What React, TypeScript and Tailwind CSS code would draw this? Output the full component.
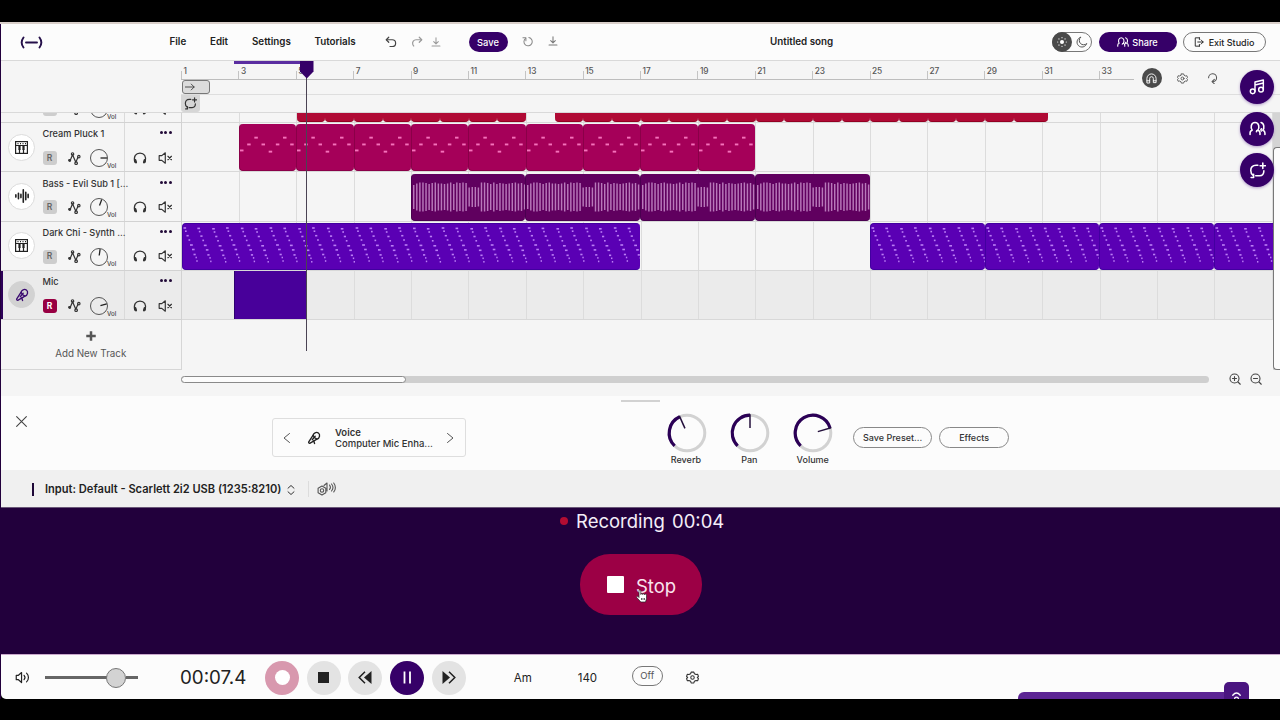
import React from "react";

type IconProps = { className?: string; children?: React.ReactNode; sw?: number; box?: string };

function Svg({ className, children, sw = 2, box = "0 0 24 24" }: IconProps) {
  return (
    <svg
      className={`shrink-0 ${className ?? ""}`}
      viewBox={box}
      fill="none"
      stroke="currentColor"
      strokeWidth={sw}
      strokeLinecap="round"
      strokeLinejoin="round"
    >
      {children}
    </svg>
  );
}

const UndoIcon = ({ className }: IconProps) => (
  <Svg className={className} sw={2.4}>
    <path d="M7.500 2.500 2.500 7.500l5 5" />
    <path d="M3 7.500H14.500a6.700 6.700 0 0 1 0 13.500H10" />
  </Svg>
);
const RedoIcon = ({ className }: IconProps) => (
  <Svg className={className} sw={2.4}>
    <path d="m16.500 2.500 5 5-5 5" />
    <path d="M21 7.500H10a7 7 0 0 0-6.500 9c.3 1.500 1 2.800 2 3.500" />
  </Svg>
);
const DownloadIcon = ({ className }: IconProps) => (
  <Svg className={className} sw={2.5}>
    <path d="M12 2v14M6.500 11l5.500 5.500 5.500-5.500M2.500 21.500h19" />
  </Svg>
);
const HistoryIcon = ({ className }: IconProps) => (
  <Svg className={className} sw={2.2}>
    <path d="M2 4h6.500v6.500" />
    <path d="M8 5a9 9 0 1 0 7-1.500" />
  </Svg>
);
const LoopRedoIcon = ({ className }: IconProps) => (
  <Svg className={className} sw={2.3}>
    <path d="M3.500 10.500a8.700 8.700 0 1 1 9.500 8.500" />
    <path d="m16 14-5 5 5 4.500" />
  </Svg>
);
const PeopleIcon = ({ className, sw = 2.2 }: IconProps) => (
  <Svg className={className} sw={sw}>
    <path d="M1.500 20.500v-2c0-2.300 1-3.500 3-4C2 11 2.500 3.500 8.500 3.500s6.500 7.500 4 11c-1.200 0-2 .8-2 2M12.500 14.500c2 .5 3 1.700 3 4v2" />
    <path d="M17 3.500c4.500 1 5 8 2.500 11 2 .7 3 1.800 3 4v2M17.500 15.500c-1-1-1-2 0-3" />
  </Svg>
);
const LoopPlusIcon = ({ className }: IconProps) => (
  <Svg className={className} sw={2.2}>
    <path d="M12.500 4.500H10C4.500 4.500 2.500 8 2.500 12c0 3 1 5 3 6.500M3 22h3.500v-4.500M9.500 19.500H15c4.500 0 6-3 6-7" />
    <path d="M19.500 1.500v7.500M15.700 5.200h7.600" />
  </Svg>
);
const MusicIcon = ({ className }: IconProps) => (
  <Svg className={className} sw={2.2}>
    <path d="M9 18.500V4.500l12.500-3V16M9 9l12.500-3" />
    <circle cx="5.500" cy="18.500" r="3.500" />
    <circle cx="18" cy="16" r="3.500" />
  </Svg>
);
const GearIcon = ({ className }: IconProps) => (
  <Svg className={className} sw={2}>
    <path d="M9.500 2h5l1 3 3 1.500 3-.5 1.500 4-2 2 2 2-1.500 4-3-.5-3 1.500-1 3h-5l-1-3-3-1.500-3 .5-1.500-4 2-2-2-2 1.500-4 3 .5 3-1.500z" />
    <circle cx="12" cy="12" r="3.200" />
  </Svg>
);
const MicIcon = ({ className, sw = 2.3 }: IconProps) => (
  <Svg className={className} sw={sw}>
    <path d="M10.500 7 3 18.500c-.8 1.800.8 3.200 2.400 2.300L17 14" />
    <path d="M10.500 7.500C11 3.500 16 1 19.500 3.500S22 13 17 14c-3-1-5.500-3.500-6.500-6.500z" />
    <path d="M9 15 14 9M11.500 17l1.500 4.500" />
  </Svg>
);
const KeysIcon = ({ className }: IconProps) => (
  <svg className={className} viewBox="0 0 13 13" fill="none" stroke="#222" strokeWidth="1.200">
    <rect x=".6" y=".6" width="11.800" height="11.800" />
    <path d="M.6 4.500h11.800M4.500 8v4.500M8.500 8v4.500" />
    <path d="M4.500 4.500V9M8.500 4.500V9" strokeWidth="2.200" />
    <path d="M2.500 2.600h1M5 2.600h1M7.500 2.600h1M10 2.600h1" />
  </svg>
);
const WaveIcon = ({ className }: IconProps) => (
  <Svg className={className} sw={1.500} box="0 0 13 13">
    <path d="M.8 5.500v2M3.200 4v5M5.500 5v3M7.700 .8v11.400M10 3v7M12.200 5v3" />
  </Svg>
);
const AutomationIcon = ({ className }: IconProps) => (
  <Svg className={className} sw={1.100} box="0 0 12 12">
    <path d="M.6 7.500 2 7.800 4.200 2.500 7.200 9.500 9.200 4.800" />
    <circle cx="4.200" cy="1.800" r="1.100" />
    <circle cx="7.500" cy="10.300" r="1.200" />
    <circle cx="10" cy="4.300" r="1.100" />
    <circle cx="1.600" cy="7.800" r=".8" />
  </Svg>
);
const HeadphonesIcon = ({ className }: IconProps) => (
  <Svg className={className} sw={2.1}>
    <path d="M3 19C.5 9 5 3.500 12 3.500S23.500 9 21 19" />
    <path d="m4 15.500 1.200 4M20 15.500l-1.200 4" strokeWidth="3.600" />
  </Svg>
);
const MuteIcon = ({ className }: IconProps) => (
  <Svg className={className} sw={2}>
    <path d="M2 8v8h4.500l6 5V3l-6 5zM17 9l6 6M23 9l-6 6" />
  </Svg>
);
const SpeakerIcon = ({ className }: IconProps) => (
  <Svg className={className} sw={1.900}>
    <path d="M2 8.500v7h3.500l5 4.500V4l-5 4.500zM14.500 8.500c1.700 2 1.700 5 0 7M18.500 5c4 4 4 10 0 14" />
  </Svg>
);

function VolDial({ angle }: { angle: number }) {
  return (
    <svg className="h-[20px] w-[20px] shrink-0" viewBox="-10 -10 20 20" fill="none" stroke="#555">
      <circle r="8.500" strokeWidth="1" />
      <path d="M0 -1.500V-8" stroke="#222" strokeWidth="1.300" transform={`rotate(${angle})`} />
    </svg>
  );
}

type Track = { name?: string; icon: "keys" | "wave" | "mic"; angle: number; armed?: boolean };

function TrackHead({ name, icon, angle, armed }: Track) {
  return (
    <div
      className={`flex h-[49.25px] w-[180.5px] shrink-0 border-r border-b border-[#d2d2d2] ${armed ? "bg-[#ebebeb]" : "bg-[#f5f5f5]"}`}
    >
      <div className={`flex w-[41px] shrink-0 items-center ${armed ? "border-l-2 border-[#2d0058] pl-[5px]" : "pl-[7px]"}`}>
        <div
          className={`flex h-[27px] w-[27px] items-center justify-center rounded-full border ${armed ? "border-[#d2d2d2] bg-[#d2d2d2]" : "border-[#dcdcdc] bg-white"}`}
        >
          {icon === "keys" && <KeysIcon className="h-[13px] w-[13px]" />}
          {icon === "wave" && <WaveIcon className="h-[14px] w-[14px] text-[#222]" />}
          {icon === "mic" && <MicIcon className="h-[14px] w-[14px] text-[#3a0a70]" />}
        </div>
      </div>
      <div className="flex w-[83px] shrink-0 flex-col border-r border-[#dadada]">
        <div className="flex h-[22px] items-center whitespace-nowrap pl-[0.5px] text-[9.2px] font-medium leading-none text-[#333]">
          {name}
        </div>
        <div className="flex h-[26px] items-center pl-[0.5px]">
          <div
            className={`flex h-[14px] w-[14px] items-center justify-center rounded-[3px] text-[8.5px] leading-none ${armed ? "bg-[#980042] font-bold text-white" : "bg-[#cdcdcd] font-semibold text-[#666]"}`}
          >
            {name ? "R" : null}
          </div>
          <AutomationIcon className="ml-[11.5px] h-[13px] w-[13px] text-[#333]" />
          <div className="ml-[8px] flex items-end">
            <VolDial angle={angle} />
            <span className="-mb-px -ml-[2px] text-[6.2px] font-medium leading-none text-[#444]">Vol</span>
          </div>
        </div>
      </div>
      <div className="flex w-[56px] flex-col">
        <div className="flex h-[20px] items-center justify-center gap-[1.500px] pl-[26px]">
          <i className="h-[3px] w-[3px] rounded-full bg-[#220a38]" />
          <i className="h-[3px] w-[3px] rounded-full bg-[#220a38]" />
          <i className="h-[3px] w-[3px] rounded-full bg-[#220a38]" />
        </div>
        <div className="flex h-[29px] items-center pt-[2px] pl-[8px] text-[#333]">
          <HeadphonesIcon className="h-[14px] w-[14px]" />
          <MuteIcon className="ml-[11px] h-[14px] w-[14px]" />
        </div>
      </div>
    </div>
  );
}

const pinkY = [26.500, 20.500, 13.700, 20.500, 27.700, 20.500, 13.700, 20.500];

function PinkClip() {
  return (
    <div className="h-[47px] w-[57.38px] shrink-0 overflow-hidden rounded-[4px] border-b border-l border-[#8a0048] bg-[#a50059]">
      <svg className="h-full w-full" fill="#f572bb">
        {pinkY.map((y, i) => (
          <rect key={i} x={i * 7.170} y={y - 1} width="3.500" height="1.900" />
        ))}
      </svg>
    </div>
  );
}

const waveH = [24, 27, 29, 29, 28, 26, 28, 29, 27, 27, 26, 27, 29, 26, 29, 28, 29, 28, 19, 20, 20, 19, 29, 29, 28, 26, 29, 26, 28, 27, 26, 27, 28, 29, 27, 28, 25];

function BassClip() {
  return (
    <div className="h-[47px] w-[114.76px] shrink-0 overflow-hidden rounded-[4px] border-b border-l border-[#4a0050] bg-[#60005f]">
      <svg className="h-full w-full" fill="#b878ba">
        {waveH.map((h, i) => (
          <rect key={i} x={1 + i * 3.080} y={23 - h / 2} width="1.450" height={h} />
        ))}
      </svg>
    </div>
  );
}

const synthDots = [
  [0.500, 4, 2.600], [2, 7.200, 1.700], [3.500, 11.700, 2.200], [5.500, 16, 1.700], [7, 21, 2.800],
  [9, 25.500, 2.600], [10.500, 30.500, 2.200], [12.500, 33.500, 1.400], [13.300, 37, 1.400],
];

function SynthClip({ wide }: { wide?: boolean }) {
  const count = wide ? 33 : 9;
  return (
    <div
      className={`h-[47px] shrink-0 overflow-hidden rounded-[4px] border-t border-b border-l border-[#4200a0] bg-[#5a00b4] ${wide ? "w-[458.500px]" : "w-[114.76px]"}`}
    >
      <svg className="h-full w-full" fill="#bb7df5">
        {Array.from({ length: count }, (_, c) =>
          synthDots.map(([x, y, w], i) => (
            <rect key={`${c}-${i}`} x={x + c * 14.345 - (c % 2) * 0.500} y={y + (c % 3) * 0.400 - 0.800} width={w} height="1.600" />
          )),
        )}
      </svg>
    </div>
  );
}

function RedClip({ last }: { last?: boolean }) {
  return (
    <div className={`h-[9px] shrink-0 rounded-b-[4px] border-b border-[#930022] bg-[#b00a35] ${last ? "w-[34px]" : "w-[28.690px]"}`} />
  );
}

function times(n: number) {
  return Array.from({ length: n }, (_, i) => i);
}

function Lane({ children, selected, short }: { children?: React.ReactNode; selected?: boolean; short?: boolean }) {
  return (
    <div
      className={`relative w-full shrink-0 overflow-hidden border-b border-[#d8d8d8] ${short ? "h-[10px]" : "h-[49.25px]"} ${selected ? "bg-[#ebebeb]" : "bg-[#f5f5f5]"}`}
    >
      <div className="absolute inset-0 flex">
        {times(20).map((i) => (
          <div key={i} className={`w-[57.380px] shrink-0 ${i ? "border-l border-[#dcdcdc]" : ""}`} />
        ))}
      </div>
      <div className="relative flex h-full items-start">{children}</div>
    </div>
  );
}

function BigDial({ label, angle }: { label: string; angle: number }) {
  const r = 17.800;
  const pt = (deg: number, rad: number) => {
    const a = ((deg - 90) * Math.PI) / 180;
    return `${(rad * Math.cos(a)).toFixed(2)} ${(rad * Math.sin(a)).toFixed(2)}`;
  };
  const large = angle + 136 > 180 ? 1 : 0;
  return (
    <div className="flex w-[63.400px] flex-col items-center">
      <svg className="h-[42px] w-[42px]" viewBox="-21 -21 42 42" fill="none">
        <circle r={r} stroke="#d2d2d2" strokeWidth="3" />
        <path d={`M${pt(-136, r)}A${r} ${r} 0 ${large} 1 ${pt(angle, r)}`} stroke="#2b0056" strokeWidth="3.200" />
        <path d={`M${pt(angle, r + 1)}L${pt(angle, 5)}`} stroke="#24103c" strokeWidth="1.500" />
      </svg>
      <span className="mr-[1.500px] text-[9px] font-medium leading-[12px] text-[#333]">{label}</span>
    </div>
  );
}

function Header() {
  return (
    <header className="flex h-[37px] shrink-0 items-center border-b border-[#d9d9d9] bg-[#fcfcfc] text-[9.8px] font-semibold text-[#222]">
      <svg className="ml-[19px] h-[13px] w-[23px] text-[#25104a]" viewBox="0 0 23 13" fill="none" stroke="currentColor" strokeWidth="1.900" strokeLinecap="round">
        <path d="M3.500 1.500Q-.2 6.500 3.500 11.500M19.500 1.500q3.700 5 0 10M6 6.500h11" />
      </svg>
      <nav className="ml-[126.500px] flex whitespace-nowrap">
        <span className="w-[40.500px]">File</span>
        <span className="w-[42px]">Edit</span>
        <span className="w-[62.500px]">Settings</span>
        <span className="w-[70px]">Tutorials</span>
      </nav>
      <UndoIcon className="h-[12px] w-[12px] text-[#444]" />
      <RedoIcon className="ml-[14px] h-[12px] w-[12px] text-[#999]" />
      <DownloadIcon className="ml-[8px] h-[10px] w-[10px] text-[#999]" />
      <div className="ml-[28px] flex h-[20px] w-[39px] items-center justify-center rounded-full bg-[#360068] pt-[2px] text-[9.300px] font-medium text-white">
        Save
      </div>
      <HistoryIcon className="ml-[14.500px] mb-[2px] h-[11px] w-[11px] text-[#888]" />
      <DownloadIcon className="ml-[15px] mb-[2px] h-[10px] w-[10px] text-[#777]" />
      <div className="ml-[182px] w-[134px] whitespace-nowrap pl-[30px]">Untitled song</div>
      <div className="ml-[177.500px] flex h-[20px] w-[40px] shrink-0 items-center rounded-full border border-[#777]">
        <div className="-ml-px flex h-[20px] w-[20px] shrink-0 items-center justify-center rounded-full bg-[#4a4a4a]">
          <svg className="h-[12px] w-[12px]" viewBox="-6 -6 12 12" fill="#fff">
            <circle r="2" />
            {times(8).map((i) => (
              <circle key={i} cx="0" cy="-4.300" r=".6" transform={`rotate(${i * 45})`} />
            ))}
          </svg>
        </div>
        <Svg className="ml-[4px] h-[12px] w-[12px] text-[#555]">
          <path d="M9 2.500A10 10 0 1 0 21.500 15 8.500 8.500 0 0 1 9 2.500z" />
        </Svg>
      </div>
      <div className="ml-[7px] flex h-[20px] w-[78px] items-center justify-center gap-[3px] rounded-full bg-[#360068] text-[9.200px] font-medium text-white">
        <PeopleIcon className="mb-px h-[12px] w-[12px]" />
        <span className="pt-px">Share</span>
      </div>
      <div className="ml-[6px] flex h-[20px] w-[83px] items-center justify-center gap-[5px] whitespace-nowrap rounded-full border border-[#777] text-[9px] font-medium">
        <Svg className="mb-px h-[10px] w-[10px]" sw={2.200}>
          <path d="M13 2H3v20h10M13 2v4M13 22v-4M9 12h13M17 7l5 5-5 5" />
        </Svg>
        <span className="pt-px">Exit Studio</span>
      </div>
    </header>
  );
}

function Ruler() {
  return (
    <div className="flex h-[52px] shrink-0 border-b border-[#d9d9d9] bg-[#f5f5f5]">
      <div className="w-[180px] shrink-0" />
      <div className="flex flex-1 flex-col">
        <div className="flex h-[34px] border-b border-[#dedede]">
          <div className="flex w-[953px] shrink-0 flex-col">
            <div className="flex h-[19px] overflow-hidden border-b border-[#bdbdbd]">
              {times(17).map((i) => (
                <div key={i} className="flex w-[57.380px] shrink-0 items-end">
                  <div className="h-[8px] w-px bg-[#c4c4c4]" />
                  <span className="pb-[3px] pl-[1.500px] text-[8.300px] font-medium leading-[10px] text-[#555]">{i * 2 + 1}</span>
                </div>
              ))}
            </div>
            <div className="ml-[1px] flex h-[14px] w-[28px] items-center rounded-[3px] border border-[#777] bg-[#dcdcdc] pl-[2px] text-[#333]">
              <Svg className="h-[10px] w-[10px]">
                <path d="M1 12h21M15 5l7 7-7 7" />
              </Svg>
            </div>
          </div>
          <div className="flex items-center pl-[7.500px] pt-px text-[#555]">
            <div className="flex h-[20px] w-[20px] items-center justify-center rounded-full bg-[#4a4a4a] text-white">
              <Svg className="h-[11px] w-[11px]">
                <path d="M2 21v-9a10 10 0 0 1 20 0v9h-6v-9a4 4 0 0 0-8 0v9zM2 17h6M16 17h6" />
              </Svg>
            </div>
            <GearIcon className="ml-[15px] h-[11px] w-[11px]" />
            <LoopRedoIcon className="ml-[19.500px] h-[11px] w-[11px]" />
          </div>
        </div>
        <div className="flex h-[17px] w-[19px] items-center justify-center rounded-b-[3px] bg-[#d6d6d6] text-[#333]">
          <LoopPlusIcon className="h-[13px] w-[13px]" />
        </div>
      </div>
    </div>
  );
}

function Arrangement() {
  return (
    <section className="relative flex h-[335px] shrink-0 flex-col bg-[#f5f5f5]">
      <Ruler />
      <div className="flex h-[257px] shrink-0">
        <div className="flex w-[180.500px] shrink-0 flex-col">
          <div className="flex h-[10px] flex-col justify-end overflow-hidden">
            <TrackHead icon="keys" angle={90} />
          </div>
          <TrackHead name="Cream Pluck 1" icon="keys" angle={90} />
          <TrackHead name="Bass - Evil Sub 1 [..." icon="wave" angle={20} />
          <TrackHead name="Dark Chi - Synth ..." icon="keys" angle={8} />
          <TrackHead name="Mic" icon="mic" angle={75} armed />
          <div className="flex h-[50px] shrink-0 flex-col items-center border-r border-b border-[#d6d6d6] pt-[10px] text-[#555]">
            <Svg className="h-[12px] w-[12px]" sw={5}>
              <path d="M12 2.500v19M2.500 12h19" strokeLinecap="butt" />
            </Svg>
            <span className="mt-[5px] text-[9.800px] leading-[13px]">Add New Track</span>
          </div>
        </div>
        <div className="flex min-w-0 flex-1 flex-col overflow-hidden">
          <Lane short>
            <div className="w-[115px] shrink-0" />
            {times(8).map((i) => (
              <RedClip key={i} />
            ))}
            <div className="w-[28.690px] shrink-0" />
            {times(16).map((i) => (
              <RedClip key={i} />
            ))}
            <RedClip last />
          </Lane>
          <Lane>
            <div className="mt-px ml-[57.300px] flex">
              {times(9).map((i) => (
                <PinkClip key={i} />
              ))}
            </div>
          </Lane>
          <Lane>
            <div className="mt-[1.400px] ml-[229px] flex">
              {times(4).map((i) => (
                <BassClip key={i} />
              ))}
            </div>
          </Lane>
          <Lane>
            <div className="mt-px flex">
              <SynthClip wide />
              <div className="w-[229.900px] shrink-0" />
              {times(4).map((i) => (
                <SynthClip key={i} />
              ))}
            </div>
          </Lane>
          <Lane selected>
            <div className="ml-[52.500px] h-full w-[72px] border-l border-[#2e0070] bg-[#48009a]" />
          </Lane>
        </div>
        <div className="flex w-[7px] shrink-0 flex-col bg-[#d4d4d4] pt-[34px]">
          <div className="flex-1 rounded-l-[4px] border border-r-0 border-[#777] bg-[#fcfcfc]" />
        </div>
      </div>
      <div className="flex h-[26px] shrink-0 items-center pb-[7px]">
        <div className="ml-[180px] flex h-[7px] w-[1028px] rounded-full bg-[#cfcfcf]">
          <div className="h-[7px] w-[225px] rounded-full border border-[#8a8a8a] bg-[#fcfcfc]" />
        </div>
        <Svg className="mb-px ml-[20px] h-[12px] w-[12px] text-[#444]" sw={2.200}>
          <circle cx="11" cy="11" r="9" />
          <path d="m18 18 4.500 4.500M7 11h8M11 7v8" />
        </Svg>
        <Svg className="mb-px ml-[9px] h-[12px] w-[12px] text-[#444]" sw={2.200}>
          <circle cx="11" cy="11" r="9" />
          <path d="m18 18 4.500 4.500M7 11h8" />
        </Svg>
      </div>

      <div className="absolute top-0 left-[233px] h-[2.500px] w-[68px] bg-[#5a2da0]" />
      <div className="absolute top-0 left-[305px] h-[290px] w-px bg-[#4a4353]" />
      <svg className="absolute top-0 left-[299px] h-[18px] w-[14px]" viewBox="0 0 14 18">
        <path d="M0 0h13.500v10.500L6.800 17.500 0 10.500z" fill="#350068" />
      </svg>
      <div className="absolute top-[9px] left-[1239px] flex flex-col gap-[7.500px] text-white">
        <div className="flex h-[34px] w-[34px] items-center justify-center rounded-full bg-[#360068] shadow-[0_1px_3px_#b09ac8]">
          <MusicIcon className="h-[16px] w-[16px]" />
        </div>
        <div className="flex h-[34px] w-[34px] items-center justify-center rounded-full bg-[#360068] shadow-[0_1px_3px_#b09ac8]">
          <PeopleIcon className="h-[17px] w-[17px]" />
        </div>
        <div className="flex h-[34px] w-[34px] items-center justify-center rounded-full bg-[#360068] shadow-[0_1px_3px_#b09ac8]">
          <LoopPlusIcon className="h-[17px] w-[17px]" />
        </div>
      </div>
    </section>
  );
}

function InstrumentPanel() {
  return (
    <section className="flex h-[74px] shrink-0 flex-col bg-[#fcfcfc]">
      <div className="ml-[620px] mt-[4px] h-[2px] w-[39px] shrink-0 bg-[#d2d2d2]" />
      <div className="flex h-[68px]">
        <Svg className="mt-[13px] ml-[14px] h-[13px] w-[13px] text-[#444]">
          <path d="M3 3l18 18M21 3 3 21" />
        </Svg>
        <div className="mt-[16px] ml-[244px] flex h-[39px] w-[194px] items-center rounded-[3px] border border-[#dedede]">
          <Svg className="ml-[8px] h-[12px] w-[12px] text-[#555]">
            <path d="m17 3-11 9 11 9" />
          </Svg>
          <MicIcon className="ml-[14px] h-[14px] w-[14px] text-[#222]" />
          <div className="mt-px ml-[14px] w-[109px] whitespace-nowrap text-[9.500px] leading-[11.500px] text-[#333]">
            <div className="font-semibold">Voice</div>
            <div className="font-medium">Computer Mic Enha...</div>
          </div>
          <Svg className="h-[12px] w-[12px] text-[#555]">
            <path d="m7 3 11 9-11 9" />
          </Svg>
        </div>
        <div className="mt-[9.500px] ml-[189px] flex">
          <BigDial label="Reverb" angle={-24} />
          <BigDial label="Pan" angle={0} />
          <BigDial label="Volume" angle={74} />
        </div>
        <div className="mt-[25px] ml-[8px] flex h-[21px] gap-[7px] text-[9px] font-medium text-[#333]">
          <div className="flex w-[79px] items-center justify-center rounded-full border border-[#888]">Save Preset...</div>
          <div className="flex w-[70px] items-center justify-center rounded-full border border-[#888]">Effects</div>
        </div>
      </div>
    </section>
  );
}

function InputBar() {
  return (
    <section className="flex h-[38px] shrink-0 items-center border-b border-[#6a5878] bg-[#f0f0f0]">
      <div className="ml-[31px] mt-[2px] h-[13px] w-[2px] bg-[#1e0838]" />
      <span className="mt-[2px] ml-[11px] w-[241px] whitespace-nowrap text-[11.100px] font-semibold text-[#222]">
        Input: Default - Scarlett 2i2 USB (1235:8210)
      </span>
      <Svg className="mt-[2px] h-[12px] w-[10px] text-[#333]" box="0 0 20 24">
        <path d="M4 8.500 10 3l6 5.500M4 15.500l6 5.500 6-5.500" />
      </Svg>
      <div className="ml-[12px] h-[16px] w-px bg-[#dcdcdc]" />
      <Svg className="ml-[8px] h-[14px] w-[19px] text-[#555]" sw={1.100} box="0 0 19 14">
        <path d="m5 4 3.800 2.200v4.600L5 13l-3.900-2.200V6.200zM7 3.500 10 1v8M12.500 3c1 1.200 1 3.300 0 4.500M14.500 2c1.700 2 1.700 5 0 7M16.700 1c2.200 2.500 2.200 7 0 9" />
        <circle cx="5" cy="8.500" r="1.700" />
      </Svg>
    </section>
  );
}

function RecordingPanel() {
  return (
    <section className="flex h-[147px] shrink-0 flex-col items-center border-b border-[#c9a8cc] bg-[#22003c] text-white">
      <div className="flex h-[25px] w-full items-center pl-[559px] text-[18.500px] leading-none text-[#f4eef8]">
        <span className="h-[8px] w-[8px] rounded-full bg-[#b20d32]" />
        <span className="ml-[8px] w-[96px] whitespace-nowrap pt-px">Recording</span>
        <span className="whitespace-nowrap pt-px">00:04</span>
      </div>
      <div className="relative mt-[21px] ml-px flex h-[61px] w-[122px] shrink-0 items-center rounded-[30px] bg-[#9c0045]">
        <span className="ml-[27px] h-[17px] w-[17px] rounded-[1px] bg-white" />
        <span className="ml-[12px] mt-[3px] text-[18.500px] leading-none text-[#fae4ee]">Stop</span>
        <svg className="absolute top-[35px] left-[56px] h-[14px] w-[12px]" viewBox="0 0 12 14" fill="#fff" stroke="#222" strokeWidth=".7">
          <path d="M3 8.500V1.800a.9.9 0 0 1 1.800 0V5.500a.9.9 0 0 1 1.900 0 .9.9 0 0 1 1.900.3.9.9 0 0 1 1.900.5v3.500L9.500 13H4.800L.8 8.500c-.5-1 .6-1.600 1.300-.9z" />
          <path d="M5.500 9v2M7 9v2M8.500 9v2" />
        </svg>
      </div>
    </section>
  );
}

function Round({ children, dark }: { children: React.ReactNode; dark?: boolean }) {
  return (
    <div className={`flex h-[34px] w-[34px] items-center justify-center rounded-full ${dark ? "bg-[#360068]" : "bg-[#e3e3e3]"}`}>
      {children}
    </div>
  );
}

function Transport() {
  return (
    <footer className="relative flex h-[44px] shrink-0 items-center overflow-hidden rounded-bl-[5px] bg-[#fcfcfc] pt-px text-[#222]">
      <SpeakerIcon className="ml-[14px] h-[15px] w-[15px]" />
      <div className="ml-[15px] flex w-[93px] items-center">
        <div className="h-[3px] w-[63px] bg-[#666]" />
        <div className="-ml-[2px] h-[20px] w-[20px] shrink-0 rounded-full border-[1.500px] border-[#777] bg-[#d3d3d3]" />
        <div className="h-[3px] w-[12px] bg-[#666]" />
      </div>
      <div className="ml-[42px] w-[85px] whitespace-nowrap pt-[2px] text-[18.800px] leading-none">00:07.4</div>
      <div className="flex gap-[7.700px]">
        <div className="flex h-[34px] w-[34px] items-center justify-center rounded-full bg-[#d898ae]">
          <div className="h-[15px] w-[15px] rounded-full bg-white" />
        </div>
        <Round>
          <div className="h-[11px] w-[11px] bg-[#222]" />
        </Round>
        <Round>
          <svg className="h-[13px] w-[14px]" viewBox="0 0 14 13" fill="none" stroke="#222" strokeWidth="1.500">
            <path d="M7 .8 1.200 6.500 7 12.200" />
            <path d="M13.500 0v13L6 6.500z" fill="#222" stroke="none" />
          </svg>
        </Round>
        <Round dark>
          <svg className="h-[13px] w-[11px]" viewBox="0 0 11 13" stroke="#fff" strokeWidth="1.800">
            <path d="M2.500 .5v12M8 .5v12" />
          </svg>
        </Round>
        <Round>
          <svg className="h-[13px] w-[14px]" viewBox="0 0 14 13" fill="none" stroke="#222" strokeWidth="1.500">
            <path d="M7 .8l5.800 5.700L7 12.200" />
            <path d="M.5 0v13L8 6.500z" fill="#222" stroke="none" />
          </svg>
        </Round>
      </div>
      <div className="ml-[48px] w-[64px] pt-[2px] text-[11.500px]">Am</div>
      <div className="w-[54px] pt-[2px] text-[11.500px]">140</div>
      <div className="mb-[3px] flex h-[20px] w-[31px] items-center justify-center rounded-full border border-[#777] text-[9.500px] text-[#555]">Off</div>
      <GearIcon className="ml-[23px] h-[13px] w-[13px] text-[#333]" />
      <div className="absolute right-0 bottom-0 flex items-end pr-[31px]">
        <div className="h-[7px] w-[206px] rounded-tl-[6px] bg-[#5c2594]" />
        <div className="flex h-[17px] w-[25px] items-center justify-center rounded-t-[5px] bg-[#4a1580] pt-[8px] text-white">
          <Svg className="h-[9px] w-[9px]" sw={3.500}>
            <path d="M2 14Q12 2 22 14M7 22q5-6 10 0" />
          </Svg>
        </div>
      </div>
    </footer>
  );
}

export default function App() {
  return (
    <div className="h-[720px] w-[1280px] overflow-hidden bg-black pt-[22px] font-['Inter','Liberation_Sans',sans-serif]">
      <div className="flex h-[677px] flex-col border-t-2 border-[#d9cfca]">
        <div className="flex flex-col border-l border-[#22003c] bg-black">
          <Header />
          <Arrangement />
          <InstrumentPanel />
          <InputBar />
          <RecordingPanel />
          <Transport />
        </div>
      </div>
    </div>
  );
}
